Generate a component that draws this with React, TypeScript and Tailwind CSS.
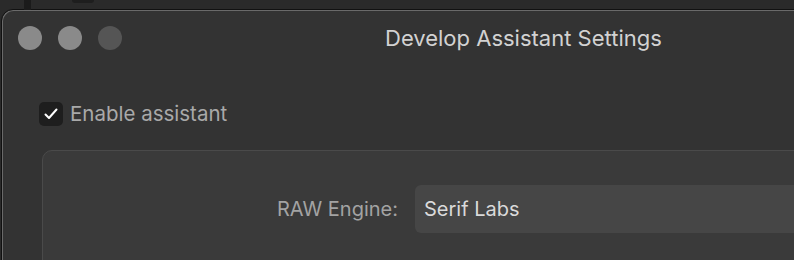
import React from "react";

export default function App() {
  return (
    <div className="w-[794px] h-[260px] overflow-hidden bg-[#2a2a2a] relative" style={{ fontFamily: "Inter, 'Noto Sans', sans-serif" }}>
      {/* background app hints */}
      <div className="absolute left-[24px] top-0 w-[7px] h-[10px] bg-[#1b1b1b]" />
      <div className="absolute left-[72px] top-[-4px] w-[22px] h-[7px] rounded-[3px] bg-[#1e1e1e]" />
      <div className="pt-[9px] pl-[1px]">
        <div className="h-[260px] w-[820px] rounded-tl-[12px] border border-[#111] bg-[#333333] shadow-[inset_1px_1px_0_#6a6a6a]">
          <div className="flex items-center h-[56px] pl-[16px]">
            <div className="flex gap-[16px]">
              <span className="w-[24px] h-[24px] rounded-full bg-[#8a8a8a]" />
              <span className="w-[24px] h-[24px] rounded-full bg-[#8a8a8a]" />
              <span className="w-[24px] h-[24px] rounded-full bg-[#555555]" />
            </div>
            <div className="ml-[263px] text-[22px] text-[#d2d2d2]">Develop Assistant Settings</div>
          </div>
          <div className="pl-[37px] pt-[33px] flex items-center gap-[7px]">
            <div className="w-[24px] h-[24px] rounded-[5px] bg-[#1e1e1e] flex items-center justify-center">
              <svg width="14" height="12" viewBox="0 0 14 12" fill="none">
                <path d="M1.5 6.5 L5 10 L12.5 1.5" stroke="#ffffff" strokeWidth="2" strokeLinecap="round" strokeLinejoin="round" />
              </svg>
            </div>
            <span className="text-[20.5px] text-[#a9a9a9]">Enable assistant</span>
          </div>
          <div className="ml-[40px] mt-[20px] h-[140px] rounded-tl-[10px] border border-[#4a4a4a] bg-[#3a3a3a] pt-[34px] flex items-start">
            <div className="w-[355px] text-right text-[20px] text-[#a3a3a3] pt-[9px]">RAW Engine:</div>
            <div className="ml-[17px] flex-1 h-[48px] rounded-[6px] bg-[#464646] flex items-center pl-[9px] text-[20px] text-[#dadada]">Serif Labs</div>
          </div>
        </div>
      </div>
    </div>
  );
}
